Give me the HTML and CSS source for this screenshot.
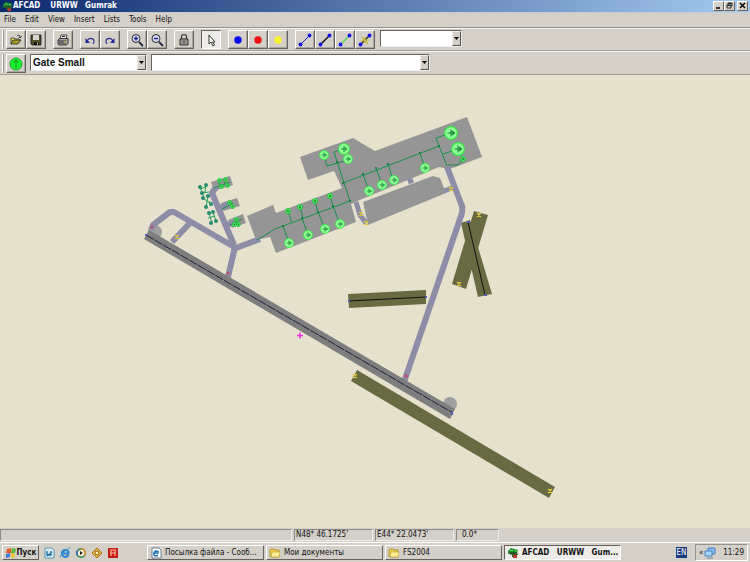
FILE: index.html
```html
<!DOCTYPE html>
<html lang="en">
<head>
<meta charset="utf-8">
<title>AFCAD URWW Gumrak</title>
<link rel="stylesheet" href="styles.css">
</head>
<body>
<svg class="defs" aria-hidden="true">
  <symbol id="plane" viewBox="0 0 12 12"><path d="M1 4 4 1l3 1 4 1-1 3-3 1-3-1-3 1z" fill="#16922c"/><path d="M3 5h7l1 3H8v2H5V8L2 7z" fill="#2e5a2a"/><path d="M6 8h4v3H6z" fill="#b6362a"/><path d="M3 3.500h3M8 4h2" stroke="#66d35a"/></symbol>
  <symbol id="folder" viewBox="0 0 12 12"><path d="M1 3q0-1 1-1h3l1 1h4v7H2L1 9z" fill="#efd04e" stroke="#a78620" stroke-width=".8"/><path d="M3 5h8l-1 5H2z" fill="#ffef94" stroke="#b69a34" stroke-width=".6"/></symbol>
  <symbol id="down" viewBox="0 0 5 3"><path d="M0 0h5L2.500 3z"/></symbol>
  <symbol id="stand" viewBox="-7 -7 14 14"><circle r="6.300" fill="#93ff9b" stroke="#35ee44" stroke-width="1.200"/><path d="M-3.500 0h7M0-3.500v7M1-2l2.500 2L1 2" fill="none" stroke="#11852d" stroke-width="1.100"/></symbol>
  <symbol id="mini" viewBox="-3 -3 6 6"><circle r="2.400" fill="#63ee72" stroke="#15c930" stroke-width="1"/><path d="M-1 0h2M0-1v2" stroke="#08742a" stroke-width=".8"/></symbol>
  <symbol id="mark" viewBox="-3 -3 6 6"><path d="M-2-2 2 2M-2 2 2-2M0-2v4" fill="none" stroke="#d9c543" stroke-width="1.200"/></symbol>
</svg>
<header class="titlebar">
  <svg class="app-icon"><use href="#plane"/></svg>
  <h1>AFCAD &nbsp;&nbsp; URWW &nbsp;&nbsp;Gumrak</h1>
  <div class="window-buttons">
    <button aria-label="Minimize"><svg viewBox="0 0 9 8"><path d="M2 6h4" stroke="#000" stroke-width="1.500"/></svg></button>
    <button aria-label="Restore"><svg viewBox="0 0 9 8"><path d="M3 3V1h4v3H6M2 3h4v3H2zM2 3.500h4M3 1.500h4" fill="none" stroke="#222" stroke-width=".9"/></svg></button>
    <button class="close" aria-label="Close"><svg viewBox="0 0 9 8"><path d="m2 1 5 5M7 1 2 6" stroke="#000" stroke-width="1.400"/></svg></button>
  </div>
</header>
<nav class="menu"><a href="#">File</a><a href="#">Edit</a><a href="#">View</a><a href="#">Insert</a><a href="#">Lists</a><a href="#">Tools</a><a href="#">Help</a></nav>
<div class="toolbar">
  <i class="grip"></i>
  <div class="group">
    <button aria-label="Open"><svg viewBox="0 0 14 14"><path d="M2 11V5h3l1 1h4v2" fill="#fff65a" stroke="#222" stroke-width=".8"/><path d="m2 11 2-4h8l-3 4z" fill="#a8a020" stroke="#222" stroke-width=".8"/><path d="M8 3q2-2 3 0v2M10 4l1 1 1.500-2" fill="none" stroke="#222" stroke-width=".8"/></svg></button>
    <button aria-label="Save"><svg viewBox="0 0 14 14"><path d="M2 2h10v10H3l-1-1z" fill="#535329" stroke="#111" stroke-width=".8"/><path d="M4 2h6v5H4z" fill="#d8d5ce"/><path d="M5 9h5v3H5z" fill="#111"/><path d="M8 9.500h1v2H8z" fill="#eee"/></svg></button>
  </div>
  <div class="group">
    <button aria-label="Print"><svg viewBox="0 0 14 14"><path d="m4 6 1-4h6l-1 4" fill="#eee" stroke="#333" stroke-width=".9"/><path d="m2 7 2-1.500h8v5L10.500 12H3l-1-1z" fill="#aaa" stroke="#222" stroke-width=".9"/><path d="M2.500 8H10M3 10h7M6 3.500h3" stroke="#222" stroke-width=".9"/><path d="M8 9h2" stroke="#ddd829"/></svg></button>
  </div>
  <div class="group">
    <button aria-label="Undo"><svg viewBox="0 0 14 14"><path d="M4 8q2-4 6-2 2 2 0 5" fill="none" stroke="#242795" stroke-width="1.100"/><path d="M2.500 5v5h4.500z" fill="#242795"/></svg></button>
    <button aria-label="Redo"><svg viewBox="0 0 14 14"><path d="M10 8Q8 4 4 6q-2 2 0 5" fill="none" stroke="#242795" stroke-width="1.100"/><path d="M11.500 5v5H7z" fill="#242795"/></svg></button>
  </div>
  <div class="group">
    <button aria-label="Zoom in"><svg viewBox="0 0 14 14"><circle cx="6" cy="5.500" r="4" fill="#d8dce5" stroke="#27293e" stroke-width="1"/><path d="M4 5.500h4M6 3.500v4" stroke="#1919a0" stroke-width="1.400"/><path d="m9 9 4 4" stroke="#252545" stroke-width="1.800"/></svg></button>
    <button aria-label="Zoom out"><svg viewBox="0 0 14 14"><circle cx="6" cy="5.500" r="4" fill="#d8dce5" stroke="#27293e" stroke-width="1"/><path d="M4 5.500h4" stroke="#1919a0" stroke-width="1.400"/><path d="m9 9 4 4" stroke="#252545" stroke-width="1.800"/></svg></button>
  </div>
  <div class="group">
    <button aria-label="Lock"><svg viewBox="0 0 14 14"><path d="M4.500 6V4q0-2.500 2.500-2.500T9.500 4v2" fill="none" stroke="#333" stroke-width="1.200"/><path d="M3 6h8v6H3z" fill="#b9b7b2" stroke="#222"/><path d="M4 8h6M4 10h6M7 7v4" stroke="#444" stroke-width=".7"/></svg></button>
  </div>
  <div class="group">
    <button class="pressed" aria-label="Select" aria-pressed="true"><svg viewBox="0 0 14 14"><path d="M5 2v9l2-2 2 4 1.500-1-2-3H11z" fill="#fff" stroke="#222" stroke-width=".9"/></svg></button>
  </div>
  <div class="group">
    <button aria-label="Blue node"><svg viewBox="0 0 14 14"><circle cx="7" cy="7" r="3.700" fill="#0808ee"/></svg></button>
    <button aria-label="Red node"><svg viewBox="0 0 14 14"><circle cx="7" cy="7" r="3.700" fill="#ee1010"/></svg></button>
    <button aria-label="Yellow node"><svg viewBox="0 0 14 14"><circle cx="7" cy="7" r="3.700" fill="#f8f52a"/></svg></button>
  </div>
  <div class="group">
    <button aria-label="Blue link"><svg viewBox="0 0 14 14"><path d="m3 11 8-8" stroke="#2020c0"/><circle cx="2.500" cy="11.500" r="1.900" fill="#1010e2"/><circle cx="11.500" cy="2.500" r="1.900" fill="#1010e2"/></svg></button>
    <button aria-label="Black link"><svg viewBox="0 0 14 14"><path d="m3 11 8-8" stroke="#111" stroke-width="1.400"/><circle cx="2.500" cy="11.500" r="1.900" fill="#1010e2"/><circle cx="11.500" cy="2.500" r="1.900" fill="#1010e2"/></svg></button>
    <button aria-label="Green link"><svg viewBox="0 0 14 14"><path d="m3 11 8-8" stroke="#42d652" stroke-width="1.200"/><circle cx="2.500" cy="11.500" r="1.900" fill="#1010e2"/><circle cx="11.500" cy="2.500" r="1.900" fill="#1010e2"/></svg></button>
    <button aria-label="Split link"><svg viewBox="0 0 14 14"><path d="m3 11 8-8" stroke="#222" stroke-width="1.200"/><path d="m4 4 6 7M3 8l8-1M7 4v6" stroke="#c6b936" stroke-width="1.200"/><circle cx="2.500" cy="11.500" r="1.900" fill="#1010e2"/><circle cx="11.500" cy="2.500" r="1.900" fill="#1010e2"/></svg></button>
  </div>
  <span class="combo short"><select aria-label="Name"><option></option></select><i><svg><use href="#down"/></svg></i></span>
</div>
<div class="toolbar second">
  <i class="grip"></i>
  <div class="group">
    <button aria-label="Parking"><svg viewBox="0 0 14 14"><circle cx="7" cy="7" r="6" fill="#14f52c" stroke="#168a25" stroke-width=".8"/><path d="M7 3v8M5 6l2-3 2 3" fill="none" stroke="#128421" stroke-width=".9"/></svg></button>
  </div>
  <span class="combo type"><select aria-label="Parking type"><option>Gate Small</option></select><i><svg><use href="#down"/></svg></i></span>
  <span class="combo long"><select aria-label="Parking spot"><option></option></select><i><svg><use href="#down"/></svg></i></span>
</div>
<main class="map">
<svg viewBox="0 75 750 453" preserveAspectRatio="xMinYMin meet" role="img" aria-label="Airport layout">
  <g fill="#686a42">
    <path d="m357 370 198 117-6 11-198-117zM348 294l78-4v14l-77 4zM461 223l9-3 22 74-14 3zM474 211l14 4-22 74-14-5z"/>
  </g>
  <g fill="#a0a0a0"><circle cx="155" cy="232" r="7"/><circle cx="450" cy="404" r="7"/></g>
  <g fill="#959595">
    <path d="m247 216 26-11 3 8 66-25-8-17-26 9-8-23 53-19 22 13 92-34 15 40-32 12-11-2-84 35-4 2 5 18-80 31-6-16-14 3z"/>
    <path d="m363 202 70-26 7 2 6 15-78 32zM211 182l19-6 3 9-19 6zM221 203l16-5 3 8-17 5zM228 220l15-6 3 9-14 5z"/>
  </g>
  <g class="taxi">
    <path d="m151 230 2-5 17-13h4l62 36 24-9M190 223l-18 19M235 247l-7 30M234 245l-22-52 4-6M220 208l9-4M227 225l9-3M447 167l15 39q1 4-1 10l-57 166"/>
    <path d="m356 202 4 13 6 8M444 191l8-3" stroke-width="5"/>
    <path d="m408 182 5-2" stroke-width="5"/>
  </g>
  <path d="m149 230 306 179-5 10-306-180z" fill="#7e7e7e"/>
  <path d="m146 235 307 178" stroke="#202038" stroke-width="1" stroke-dasharray="9 1"/>
  <path d="m349 301 77-4M468 222l17 73" stroke="#111" fill="none"/>
  <path d="M145 235h2M452 412v3M348 301h2M425 297h2M467 222h3M484 295h3" stroke="#5358bd" stroke-width="2"/>
  <g class="routes">
    <path d="m257 240 18-11 75-28-16-49 9-3M324 155l3 11 21-6M343 183l96-37M451 133l-15 5 11 28M443 154l15-5M448 165l10 0 5-6"/>
    <path d="m283 226 6 17M302 218l6 17M318 212l7 17M333 206l7 18M292 223l-4-12M303 218l-3-11M318 212l-3-11M333 206l-3-10M363 174l6 17M376 168l6 17M388 164l5 16M420 153l5 15"/>
    <path d="m214 188 16-6M218 181l4 7M223 179l4 8M222 209l11-6M229 201l4 8M230 225l12-6M234 218l4 9"/>
  </g>
  <g fill="#087939"><circle cx="283" cy="226" r="1"/><circle cx="302" cy="218" r="1"/><circle cx="318" cy="212" r="1"/><circle cx="333" cy="206" r="1"/><circle cx="350" cy="201" r="1"/><circle cx="343" cy="183" r="1"/><circle cx="363" cy="174" r="1"/><circle cx="376" cy="168" r="1"/><circle cx="388" cy="164" r="1"/><circle cx="420" cy="153" r="1"/><circle cx="439" cy="146" r="1"/><circle cx="337" cy="162" r="1"/></g>
  <g>
    <use href="#stand" x="444" y="126" width="14" height="14"/><use href="#stand" x="451" y="142" width="14" height="14"/><use href="#stand" x="338" y="143" width="12" height="12"/>
    <use href="#stand" x="319" y="150" width="10" height="10"/><use href="#stand" x="343" y="154" width="10" height="10"/><use href="#stand" x="364" y="186" width="10" height="10"/><use href="#stand" x="377" y="180" width="10" height="10"/><use href="#stand" x="389" y="175" width="10" height="10"/><use href="#stand" x="420" y="163" width="10" height="10"/>
    <use href="#stand" x="284" y="238" width="10" height="10"/><use href="#stand" x="303" y="230" width="10" height="10"/><use href="#stand" x="320" y="224" width="10" height="10"/><use href="#stand" x="335" y="219" width="10" height="10"/>
  </g>
  <g>
    <use href="#mini" x="285" y="208" width="6" height="6"/><use href="#mini" x="297" y="204" width="6" height="6"/><use href="#mini" x="312" y="198" width="6" height="6"/><use href="#mini" x="327" y="193" width="6" height="6"/><use href="#mini" x="460" y="156" width="6" height="6"/>
    <use href="#mini" x="217" y="178" width="5" height="5"/><use href="#mini" x="223" y="177" width="5" height="5"/><use href="#mini" x="219" y="184" width="5" height="5"/><use href="#mini" x="225" y="183" width="5" height="5"/><use href="#mini" x="227" y="200" width="5" height="5"/><use href="#mini" x="230" y="204" width="5" height="5"/><use href="#mini" x="234" y="217" width="5" height="5"/><use href="#mini" x="236" y="222" width="5" height="5"/><use href="#mini" x="232" y="222" width="5" height="5"/>
  </g>
  <path d="m200 187 4 11M206 185l-1 7M200 189l6-2M202 193l7-1M203 198l8 6M208 196l-2 11M209 201l3 5M209 213l3 10M213 212l3 9M208 218l7-2" stroke="#29a257" fill="none"/>
  <g fill="#278d70"><circle cx="200" cy="187" r="2"/><circle cx="206" cy="185" r="2"/><circle cx="202" cy="193" r="2"/><circle cx="203" cy="198" r="2"/><circle cx="208" cy="196" r="2"/><circle cx="206" cy="207" r="2"/><circle cx="211" cy="204" r="2"/><circle cx="209" cy="213" r="2"/><circle cx="213" cy="212" r="2"/><circle cx="211" cy="223" r="2"/><circle cx="216" cy="221" r="2"/></g>
  <g><use href="#mark" x="174" y="234" width="6" height="6"/><use href="#mark" x="476" y="212" width="6" height="6"/><use href="#mark" x="456" y="281" width="6" height="6"/><use href="#mark" x="352" y="373" width="6" height="6"/><use href="#mark" x="547" y="488" width="6" height="6"/><use href="#mark" x="358" y="211" width="6" height="6"/><use href="#mark" x="363" y="220" width="6" height="6"/><use href="#mark" x="448" y="186" width="6" height="6"/></g>
  <g fill="#c24c72"><circle cx="152" cy="227" r="1.500"/><circle cx="228" cy="273" r="1.500"/><circle cx="406" cy="376" r="1.800"/></g>
  <path d="M297 335.500h6M300 332.500v6" stroke="#ee2bdd" stroke-width="1.500"/>
</svg>
</main>
<div class="status"><span class="message"></span><span class="coord">N48* 46.1725'</span><span class="coord">E44* 22.0473'</span><span class="angle">0.0*</span></div>
<footer class="taskbar">
  <button class="start"><svg viewBox="0 0 12 12"><path d="m2 2 4-1v5H1z" fill="#e75d27"/><path d="m7 1 4 1-1 4H6z" fill="#61b537"/><path d="m1 7 4-1v4l-4 1z" fill="#407bd8"/><path d="m6 6 4 1-1 4-3-1z" fill="#f2c72e"/></svg>Пуск</button>
  <div class="quick">
    <button aria-label="Outlook Express"><svg viewBox="0 0 12 12"><path d="M2 1h7l2 2v8H2z" fill="#d9edf5" stroke="#5c94b3"/><path d="M4 4v4h4V4M4 9l5-4" fill="none" stroke="#16719e" stroke-width="1.300"/></svg></button>
    <button aria-label="Internet Explorer"><svg viewBox="0 0 12 12"><path d="M9.500 8Q6 12 3 8q-1-4 3-5 4 0 3.500 3.500H4" fill="none" stroke="#2381cf" stroke-width="2"/><path d="M2 10q-3 1 3-5t6-3" fill="none" stroke="#4ba0d9"/></svg></button>
    <button aria-label="Media Player"><svg viewBox="0 0 12 12"><circle cx="6" cy="6" r="5" fill="#3b8c57"/><path d="M6 1a5 5 0 0 1 4 8L6 6z" fill="#e0882a"/><path d="M2 9a5 5 0 0 1 0-6l4 3z" fill="#376fc0"/><circle cx="6" cy="6" r="3.200" fill="#fff7d9"/><path d="m5 4 3 2-3 2z" fill="#252525"/></svg></button>
    <button aria-label="Tools"><svg viewBox="0 0 12 12"><path d="m6 1 2 2 3 3-2 2-3 3-2-2-3-3 2-2z" fill="#efb936" stroke="#a56e20"/><circle cx="6" cy="6" r="2" fill="#fff0a4" stroke="#7b6242"/></svg></button>
    <button aria-label="Dictionary"><svg viewBox="0 0 12 12"><path d="M1 1h10v10H1z" fill="#c51e16"/><path d="M3 3h6M4 3v6M8 3v6M3 6h6" stroke="#f9b38e" stroke-width="1.200"/></svg></button>
  </div>
  <div class="tasks">
    <button><svg viewBox="0 0 12 12"><path d="M2 1h7l2 2v8H2z" fill="#fff" stroke="#6c8395"/><path d="M8 8Q6 10 4 8 3 5 6 4q3 0 2 2H4" fill="none" stroke="#2473bc" stroke-width="1.500"/></svg><span>Посылка файла - Сооб...</span></button>
    <button><svg><use href="#folder"/></svg><span>Мои документы</span></button>
    <button><svg><use href="#folder"/></svg><span>FS2004</span></button>
    <button class="active"><svg><use href="#plane"/></svg><span>AFCAD &nbsp; URWW &nbsp; Gum...</span></button>
  </div>
  <button class="language">EN</button>
  <div class="tray"><span>«</span><svg viewBox="0 0 12 12"><path d="M4 1h7v6H4z" fill="#82bdf4" stroke="#4b80be"/><path d="M1 4h7v5H1z" fill="#a6d8ff" stroke="#4d82bf"/><path d="M3 11h6" stroke="#6686a8"/></svg><time>11:29</time></div>
</footer>
</body>
</html>
```

FILE: styles.css
```css
* { box-sizing: border-box; }
body {
  margin: 0;
  min-height: 100vh;
  display: flex;
  flex-direction: column;
  background: #d4d0c8;
  color: #111;
  font: 8px/10px "DejaVu Sans Condensed", "Liberation Sans", sans-serif;
}
button, select { font: inherit; color: inherit; border-radius: 0; }
button {
  display: flex;
  align-items: center;
  justify-content: center;
  margin: 0;
  padding: 0;
  background: #d4d0c8;
  border: 1px solid;
  border-color: #fff #65625e #65625e #fff;
}
svg { display: block; flex: none; }
.defs { position: absolute; width: 0; height: 0; }

.titlebar {
  display: flex;
  align-items: center;
  height: 13px;
  padding: 0 2px;
  background: linear-gradient(90deg, #0c286c, #a6caf0);
  border-bottom: 1px solid #c5ccd5;
  color: #fff;
}
.titlebar h1 { margin: 0; font-size: 8px; line-height: 12px; font-weight: bold; white-space: pre; }
.app-icon { width: 11px; height: 11px; }
.window-buttons { display: flex; margin-left: auto; }
.window-buttons button { width: 11px; height: 10px; }
.window-buttons svg { width: 9px; height: 8px; }
.window-buttons .close { margin-left: 2px; }

.menu {
  display: flex;
  gap: 9px;
  height: 15px;
  padding: 2px 4px;
  border-bottom: 1px solid #94918c;
}
.menu a { color: inherit; text-decoration: none; }

.toolbar {
  display: flex;
  align-items: flex-start;
  gap: 7px;
  height: 23px;
  padding: 1px 2px;
  border-top: 1px solid #f5f3ee;
  border-bottom: 1px solid #a09d98;
}
.toolbar.second { height: 24px; gap: 4px; padding-top: 2px; }
.grip { width: 2px; height: 19px; margin-right: -5px; border-left: 1px solid #fff; border-right: 1px solid #9b9893; }
.second .grip { margin-right: -2px; }
.group { display: flex; }
.group button { width: 20px; height: 19px; box-shadow: inset -1px -1px #aaa7a0; }
.group svg { width: 14px; height: 14px; }
.group .pressed { background: #eeece8; border-color: #65625e #fff #fff #65625e; box-shadow: none; }
.combo { position: relative; display: block; height: 17px; }
.combo select {
  display: block;
  width: 100%;
  height: 100%;
  padding: 0 14px 0 2px;
  appearance: none;
  background: #fff;
  border: 1px solid;
  border-color: #65625e #eee #eee #65625e;
  font: bold 10px/14px "Liberation Sans", sans-serif;
}
.combo i {
  position: absolute;
  top: 1px;
  right: 1px;
  bottom: 1px;
  width: 9px;
  display: flex;
  align-items: center;
  justify-content: center;
  background: #d4d0c8;
  border: 1px solid;
  border-color: #f2f0ec #55524e #55524e #f2f0ec;
  pointer-events: none;
}
.combo i svg { width: 5px; height: 3px; }
.short { width: 82px; margin-left: -2px; }
.type { width: 117px; }
.long { width: 279px; }

.map { flex: 1; background: #e6e1cd; }
.map svg { width: 100%; }
.taxi { fill: none; stroke: #8e8da8; stroke-width: 6; stroke-linejoin: round; }
.routes { fill: none; stroke: #16914b; stroke-width: 1; }

.status { display: flex; gap: 2px; height: 14px; padding-top: 1px; }
.status span { height: 12px; padding: 0 1px; border: 1px solid; border-color: #8c8984 #efede8 #efede8 #8c8984; }
.message { flex: 0 1 292px; }
.coord { flex: 0 0 79px; }
.status .angle { flex: 0 0 43px; padding-left: 5px; }

.taskbar { display: flex; align-items: center; height: 20px; padding: 0 2px; border-top: 1px solid #fff; }
.taskbar svg { width: 12px; height: 12px; }
.start { width: 37px; height: 15px; font-weight: bold; }
.quick { display: flex; gap: 4px; margin: 0 28px 0 4px; }
.quick button { border: 0; background: none; }
.tasks { display: flex; flex: 1; gap: 2px; }
.tasks button { flex: 0 1 117px; min-width: 0; height: 15px; justify-content: flex-start; gap: 3px; padding: 0 1px 0 2px; }
.tasks span { overflow: hidden; white-space: pre; }
.tasks .active { background: #eeece8; border-color: #65625e #fff #fff #65625e; font-weight: bold; }
.language { width: 11px; height: 11px; margin-right: 8px; border: 0; background: #173b7f; color: #fff; }
.tray { display: flex; align-items: center; width: 53px; height: 17px; padding: 0 3px; gap: 1px; border: 1px solid; border-color: #96938e #fff #fff #96938e; }
.tray time { margin-left: auto; }
```
